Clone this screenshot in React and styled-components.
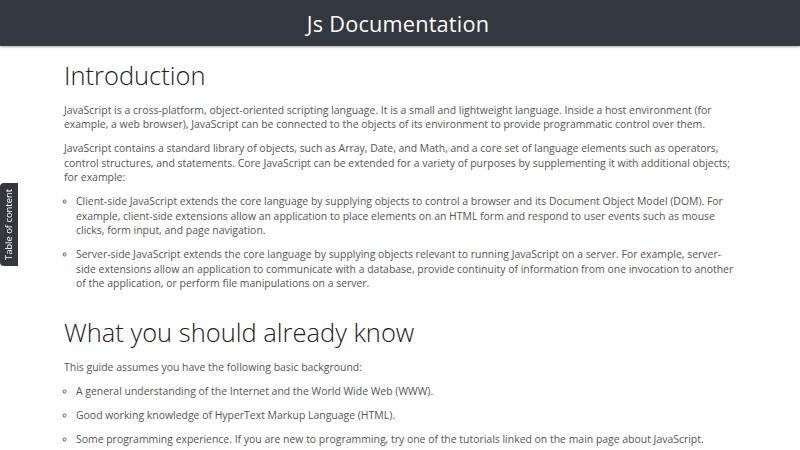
import styled, { createGlobalStyle } from "styled-components";

const GlobalStyle = createGlobalStyle`
  * { box-sizing: border-box; }
  body {
    margin: 0;
    background: #fff;
    font-family: "Open Sans", "Liberation Sans", sans-serif;
  }
`;

const intro = [
  "JavaScript is a cross-platform, object-oriented scripting language. It is a small and lightweight language. Inside a host environment (for example, a web browser), JavaScript can be connected to the objects of its environment to provide programmatic control over them.",
  "JavaScript contains a standard library of objects, such as Array, Date, and Math, and a core set of language elements such as operators, control structures, and statements. Core JavaScript can be extended for a variety of purposes by supplementing it with additional objects; for example:",
];

const introList = [
  "Client-side JavaScript extends the core language by supplying objects to control a browser and its Document Object Model (DOM). For example, client-side extensions allow an application to place elements on an HTML form and respond to user events such as mouse clicks, form input, and page navigation.",
  "Server-side JavaScript extends the core language by supplying objects relevant to running JavaScript on a server. For example, server-side extensions allow an application to communicate with a database, provide continuity of information from one invocation to another of the application, or perform file manipulations on a server.",
];

const knowList = [
  "A general understanding of the Internet and the World Wide Web (WWW).",
  "Good working knowledge of HyperText Markup Language (HTML).",
  "Some programming experience. If you are new to programming, try one of the tutorials linked on the main page about JavaScript.",
];

const App = () => {
  return (
    <>
      <GlobalStyle />
      <Header>
        <h1>Js Documentation</h1>
      </Header>
      <TocTab>Table of content</TocTab>
      <Main>
        <Section>
          <Title>Introduction</Title>
          {intro.map((t) => (
            <Text key={t}>{t}</Text>
          ))}
          <List>
            {introList.map((t) => (
              <Item key={t}>{t}</Item>
            ))}
          </List>
        </Section>
        <Section>
          <Title>What you should already know</Title>
          <Text>This guide assumes you have the following basic background:</Text>
          <List>
            {knowList.map((t) => (
              <Item key={t}>{t}</Item>
            ))}
          </List>
        </Section>
      </Main>
    </>
  );
};

const Header = styled.header`
  height: 46px;
  background: #33373e;
  display: flex;
  align-items: center;
  justify-content: center;
  box-shadow: 0 1px 2px rgba(0, 0, 0, 0.35);
  h1 {
    margin: 0 0 0 -4px;
    color: #fff;
    font-size: 21.7px;
    font-weight: 400;
    letter-spacing: 0.2px;
  }
`;

const TocTab = styled.div`
  position: fixed;
  left: 0;
  top: 183px;
  width: 18px;
  height: 83px;
  background: #33373e;
  border-radius: 0 4px 4px 0;
  color: #fff;
  font-size: 9.4px;
  writing-mode: vertical-rl;
  transform: rotate(180deg);
  display: flex;
  align-items: center;
  justify-content: center;
  white-space: nowrap;
`;

const Main = styled.main`
  width: 672px;
  margin: 0 auto;
  padding-top: 11.5px;
`;

const Section = styled.section`
  margin-bottom: 24px;
`;

const Title = styled.h2`
  margin: 0 0 11px;
  font-size: 25.5px;
  font-weight: 300;
  color: #222;
  line-height: 34px;
`;

const Text = styled.p`
  margin: 0 0 9.5px;
  font-size: 10.45px;
  line-height: 14.5px;
  color: #555;
`;

const List = styled.ul`
  margin: 0;
  padding-left: 12px;
  list-style: circle;
`;

const Item = styled.li`
  margin: 0 0 9.5px;
  font-size: 10.45px;
  line-height: 14.5px;
  color: #555;
  &::marker {
    font-size: 8px;
  }
`;

export default App;
